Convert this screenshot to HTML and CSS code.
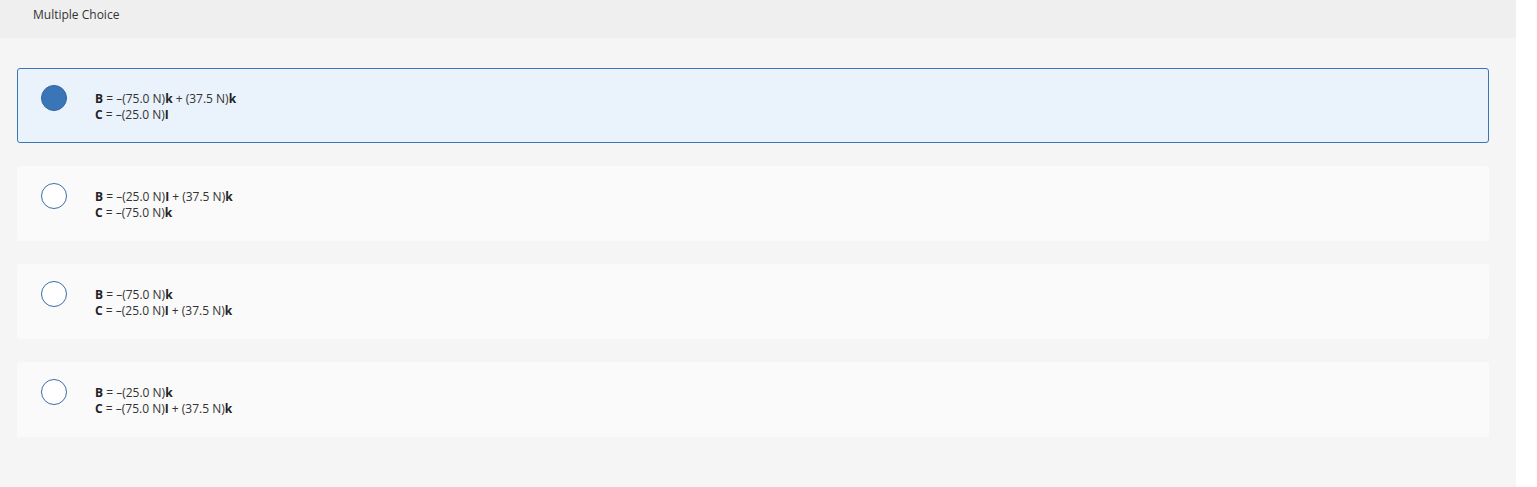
FILE: index.html
```html
<!DOCTYPE html>
<html>
<head>
<meta charset="utf-8">
<link rel="stylesheet" href="styles.css">
</head>
<body>
<div class="page">
  <div class="header">Multiple Choice</div>
  <div class="choices">
    <div class="choice selected">
      <span class="radio"></span>
      <div class="text">
        <div><b>B</b> = –(75.0 N)<b>k</b> + (37.5 N)<b>k</b></div>
        <div><b>C</b> = –(25.0 N)<b>I</b></div>
      </div>
    </div>
    <div class="choice">
      <span class="radio"></span>
      <div class="text">
        <div><b>B</b> = –(25.0 N)<b>I</b> + (37.5 N)<b>k</b></div>
        <div><b>C</b> = –(75.0 N)<b>k</b></div>
      </div>
    </div>
    <div class="choice">
      <span class="radio"></span>
      <div class="text">
        <div><b>B</b> = –(75.0 N)<b>k</b></div>
        <div><b>C</b> = –(25.0 N)<b>I</b> + (37.5 N)<b>k</b></div>
      </div>
    </div>
    <div class="choice">
      <span class="radio"></span>
      <div class="text">
        <div><b>B</b> = –(25.0 N)<b>k</b></div>
        <div><b>C</b> = –(75.0 N)<b>I</b> + (37.5 N)<b>k</b></div>
      </div>
    </div>
  </div>
</div>
</body>
</html>
```
FILE: styles.css
```css
html, body {
  margin: 0;
  padding: 0;
  background: #ffffff;
}
body {
  font-family: "Open Sans", "Liberation Sans", sans-serif;
  color: #333333;
}
.page {
  width: 1516px;
  height: 487px;
  background: #f5f5f5;
}
.header {
  height: 38px;
  background: #efefef;
  box-sizing: border-box;
  padding: 7px 0 0 33px;
  font-size: 12px;
  line-height: 16px;
  color: #333;
}
.choices {
  display: flex;
  flex-direction: column;
  gap: 23px;
  padding: 30px 27px 0 17px;
}
.choice {
  display: flex;
  align-items: flex-start;
  height: 75px;
  box-sizing: border-box;
  background: #fafafa;
  border-radius: 3px;
  padding-left: 23px;
  border: 1px solid transparent;
}
.choice.selected {
  background: #eaf2fb;
  border: 1px solid #3a75b8;
}
.radio {
  width: 24px;
  height: 24px;
  margin-top: 16px;
  border-radius: 50%;
  border: 1.5px solid #3a6ea5;
  background: #ffffff;
  flex: none;
}
.selected .radio {
  background: #3a75b8;
  border-color: #2f64a0;
}
.text {
  align-self: center;
  margin-left: 28px;
  padding-top: 2px;
  font-size: 12px;
  line-height: 16px;
  color: #333;
}
.text b {
  font-weight: 700;
  color: #222;
}
```
